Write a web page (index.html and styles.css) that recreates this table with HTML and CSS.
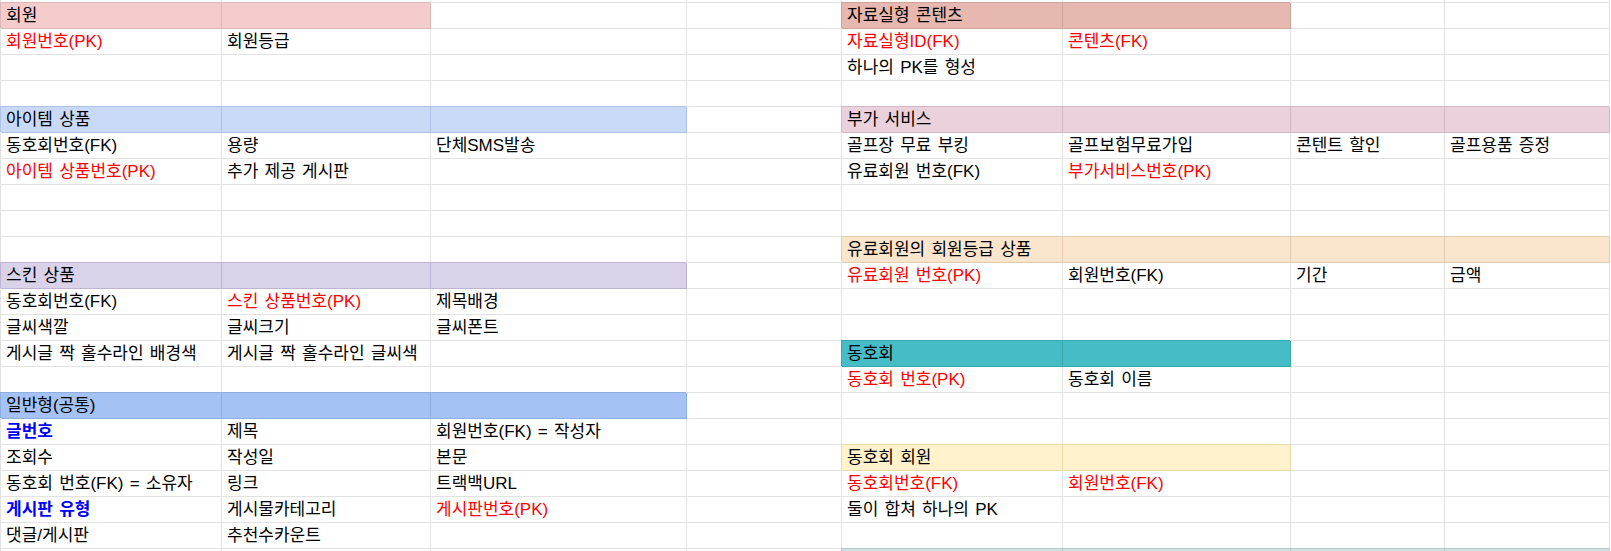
FILE: index.html
```html
<!DOCTYPE html>
<html lang="ko">
<head>
<meta charset="utf-8">
<title>Sheet</title>
<link rel="stylesheet" href="styles.css">
</head>
<body>
<div class="sheet">
  <!-- row 0 (partial) -->
  <div class="c"></div><div class="c"></div><div class="c"></div><div class="c"></div><div class="c"></div><div class="c"></div><div class="c"></div><div class="c"></div>
  <!-- row 1 -->
  <div class="c f-red">회원</div><div class="c f-red"></div><div class="c"></div><div class="c"></div><div class="c f-berry">자료실형 콘텐츠</div><div class="c f-berry"></div><div class="c"></div><div class="c"></div>
  <!-- row 2 -->
  <div class="c t-red">회원번호(PK)</div><div class="c">회원등급</div><div class="c"></div><div class="c"></div><div class="c t-red">자료실형ID(FK)</div><div class="c t-red">콘텐츠(FK)</div><div class="c"></div><div class="c"></div>
  <!-- row 3 -->
  <div class="c"></div><div class="c"></div><div class="c"></div><div class="c"></div><div class="c">하나의 PK를 형성</div><div class="c"></div><div class="c"></div><div class="c"></div>
  <!-- row 4 -->
  <div class="c"></div><div class="c"></div><div class="c"></div><div class="c"></div><div class="c"></div><div class="c"></div><div class="c"></div><div class="c"></div>
  <!-- row 5 -->
  <div class="c f-blue3">아이템 상품</div><div class="c f-blue3"></div><div class="c f-blue3"></div><div class="c"></div><div class="c f-magenta">부가 서비스</div><div class="c f-magenta"></div><div class="c f-magenta"></div><div class="c f-magenta"></div>
  <!-- row 6 -->
  <div class="c">동호회번호(FK)</div><div class="c">용량</div><div class="c">단체SMS발송</div><div class="c"></div><div class="c">골프장 무료 부킹</div><div class="c">골프보험무료가입</div><div class="c">콘텐트 할인</div><div class="c">골프용품 증정</div>
  <!-- row 7 -->
  <div class="c t-red">아이템 상품번호(PK)</div><div class="c">추가 제공 게시판</div><div class="c"></div><div class="c"></div><div class="c">유료회원 번호(FK)</div><div class="c t-red">부가서비스번호(PK)</div><div class="c"></div><div class="c"></div>
  <!-- row 8 -->
  <div class="c"></div><div class="c"></div><div class="c"></div><div class="c"></div><div class="c"></div><div class="c"></div><div class="c"></div><div class="c"></div>
  <!-- row 9 -->
  <div class="c"></div><div class="c"></div><div class="c"></div><div class="c"></div><div class="c"></div><div class="c"></div><div class="c"></div><div class="c"></div>
  <!-- row 10 -->
  <div class="c"></div><div class="c"></div><div class="c"></div><div class="c"></div><div class="c f-orange">유료회원의 회원등급 상품</div><div class="c f-orange"></div><div class="c f-orange"></div><div class="c f-orange"></div>
  <!-- row 11 -->
  <div class="c f-purple">스킨 상품</div><div class="c f-purple"></div><div class="c f-purple"></div><div class="c"></div><div class="c t-red">유료회원 번호(PK)</div><div class="c">회원번호(FK)</div><div class="c">기간</div><div class="c">금액</div>
  <!-- row 12 -->
  <div class="c">동호회번호(FK)</div><div class="c t-red">스킨 상품번호(PK)</div><div class="c">제목배경</div><div class="c"></div><div class="c"></div><div class="c"></div><div class="c"></div><div class="c"></div>
  <!-- row 13 -->
  <div class="c">글씨색깔</div><div class="c">글씨크기</div><div class="c">글씨폰트</div><div class="c"></div><div class="c"></div><div class="c"></div><div class="c"></div><div class="c"></div>
  <!-- row 14 -->
  <div class="c">게시글 짝 홀수라인 배경색</div><div class="c">게시글 짝 홀수라인 글씨색</div><div class="c"></div><div class="c"></div><div class="c f-teal">동호회</div><div class="c f-teal"></div><div class="c"></div><div class="c"></div>
  <!-- row 15 -->
  <div class="c"></div><div class="c"></div><div class="c"></div><div class="c"></div><div class="c t-red">동호회 번호(PK)</div><div class="c">동호회 이름</div><div class="c"></div><div class="c"></div>
  <!-- row 16 -->
  <div class="c f-blue2">일반형(공통)</div><div class="c f-blue2"></div><div class="c f-blue2"></div><div class="c"></div><div class="c"></div><div class="c"></div><div class="c"></div><div class="c"></div>
  <!-- row 17 -->
  <div class="c t-blue">글번호</div><div class="c">제목</div><div class="c">회원번호(FK) = 작성자</div><div class="c"></div><div class="c"></div><div class="c"></div><div class="c"></div><div class="c"></div>
  <!-- row 18 -->
  <div class="c">조회수</div><div class="c">작성일</div><div class="c">본문</div><div class="c"></div><div class="c f-yellow">동호회 회원</div><div class="c f-yellow"></div><div class="c"></div><div class="c"></div>
  <!-- row 19 -->
  <div class="c">동호회 번호(FK) = 소유자</div><div class="c">링크</div><div class="c">트랙백URL</div><div class="c"></div><div class="c t-red">동호회번호(FK)</div><div class="c t-red">회원번호(FK)</div><div class="c"></div><div class="c"></div>
  <!-- row 20 -->
  <div class="c t-blue">게시판 유형</div><div class="c">게시물카테고리</div><div class="c t-red">게시판번호(PK)</div><div class="c"></div><div class="c">둘이 합쳐 하나의 PK</div><div class="c"></div><div class="c"></div><div class="c"></div>
  <!-- row 21 -->
  <div class="c">댓글/게시판</div><div class="c">추천수카운트</div><div class="c"></div><div class="c"></div><div class="c"></div><div class="c"></div><div class="c"></div><div class="c"></div>
  <!-- row 22 -->
  <div class="c"></div><div class="c"></div><div class="c"></div><div class="c"></div><div class="c f-cyan"></div><div class="c f-cyan"></div><div class="c f-cyan"></div><div class="c f-cyan"></div>
</div>
</body>
</html>
```
FILE: styles.css
```css
html, body {
  margin: 0;
  padding: 0;
  background: #ffffff;
  overflow: hidden;
}

body {
  width: 1611px;
  height: 551px;
  font-family: "Liberation Sans", "Noto Sans CJK KR", sans-serif;
  font-size: 17px;
  word-spacing: 1.5px;
  color: #000000;
}

.sheet {
  display: grid;
  grid-template-columns: 221px 209px 256px 155px 221px 228px 154px 165px;
  grid-auto-rows: 26px;
  margin-top: -23px;
  border-left: 1px solid #e2e2e2;
  width: max-content;
}

.c {
  --bd: #e2e2e2;
  border-right: 1px solid var(--bd);
  border-bottom: 1px solid var(--bd);
  padding: 0 4px 0 5px;
  line-height: 25px;
  white-space: nowrap;
  overflow: visible;
}

.t-red { color: #ff0000; }
.t-blue { color: #0000ff; font-weight: bold; }

.f-red, .f-berry, .f-blue3, .f-blue2, .f-magenta,
.f-orange, .f-purple, .f-teal, .f-yellow, .f-cyan {
  box-shadow: -1px -1px 0 0 var(--bd);
  position: relative;
}

.f-red { background: #f4cccc; --bd: #dcb7b7; }
.f-berry { background: #e6b8af; --bd: #cca29a; }
.f-blue3 { background: #c9daf8; --bd: #adc2e4; }
.f-blue2 { background: #a4c2f4; --bd: #8eaedf; }
.f-magenta { background: #ead1dc; --bd: #d2b8c4; }
.f-orange { background: #fce5cd; --bd: #e6cbb0; }
.f-purple { background: #d9d2e9; --bd: #bdb3d2; }
.f-teal { background: #46bdc6; --bd: #3aa6ae; }
.f-yellow { background: #fff2cc; --bd: #ead9ad; }
.f-cyan { background: #d0e0e3; --bd: #b6c8cc; }
```
